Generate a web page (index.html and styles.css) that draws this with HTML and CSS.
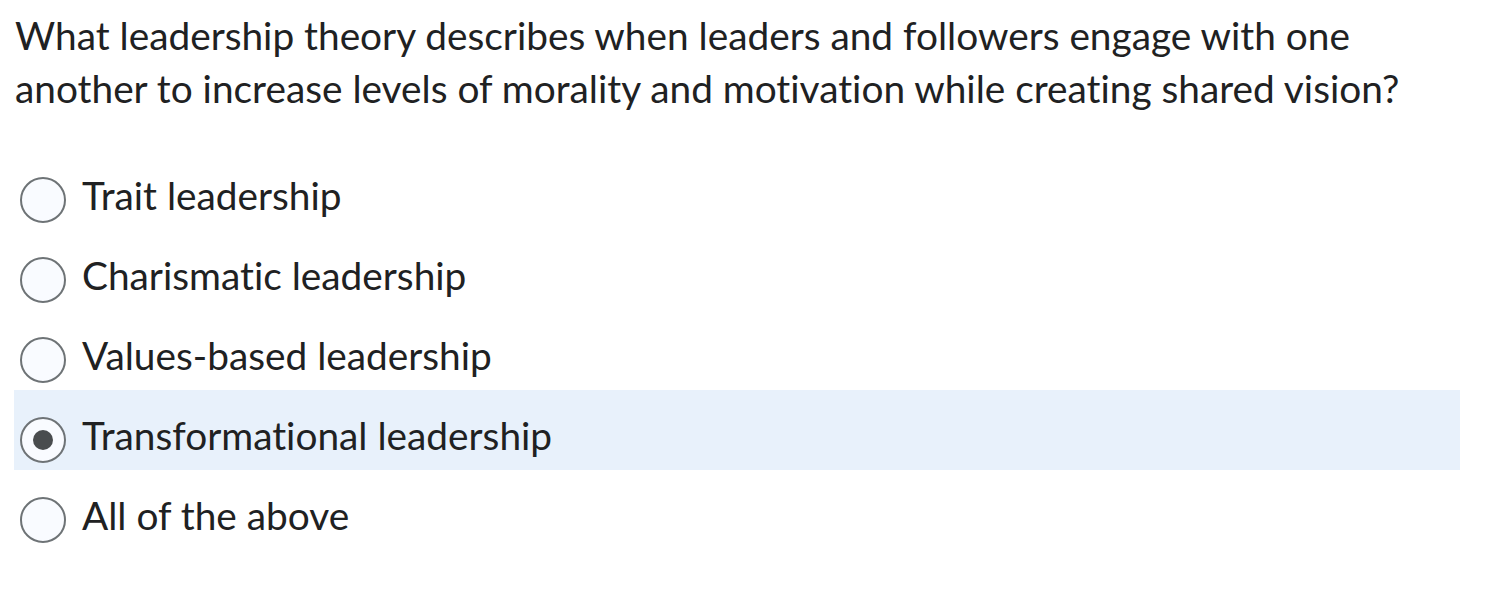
FILE: index.html
```html
<!DOCTYPE html>
<html lang="en">
<head>
<meta charset="utf-8">
<title>Quiz question</title>
<link rel="stylesheet" href="styles.css">
</head>
<body>
<div class="quiz">
  <p class="question">What leadership theory describes when leaders and followers engage with one another to increase levels of morality and motivation while creating shared vision?</p>
  <div class="options" role="radiogroup">
    <label class="option"><span class="radio"></span><span class="label">Trait leadership</span></label>
    <label class="option"><span class="radio"></span><span class="label">Charismatic leadership</span></label>
    <label class="option"><span class="radio"></span><span class="label">Values-based leadership</span></label>
    <label class="option selected"><span class="radio checked"></span><span class="label">Transformational leadership</span></label>
    <label class="option"><span class="radio"></span><span class="label">All of the above</span></label>
  </div>
</div>
</body>
</html>
```
FILE: styles.css
```css
html, body {
  margin: 0;
  padding: 0;
  background: #ffffff;
}
body {
  font-family: Lato, "Open Sans", sans-serif;
  color: #202122;
  font-variant-ligatures: none;
}
.quiz {
  padding: 9px 38px 0 14px;
}
.question {
  margin: 0 0 35px 1px;
  font-size: 38.8px;
  line-height: 53px;
}
.options {
  display: flex;
  flex-direction: column;
}
.option {
  display: flex;
  align-items: flex-start;
  gap: 16px;
  height: 80px;
  padding: 27px 0 0 6px;
  box-sizing: border-box;
  font-size: 38.8px;
}
.option.selected {
  background: #e8f1fb;
}
.radio {
  flex: none;
  width: 46px;
  height: 46px;
  box-sizing: border-box;
  border: 2px solid #6e7376;
  border-radius: 50%;
  background: #f9fbff;
  display: flex;
  align-items: center;
  justify-content: center;
}
.radio.checked::after {
  content: "";
  width: 20px;
  height: 20px;
  border-radius: 50%;
  background: #494c4e;
}
.label {
  line-height: 46px;
  margin-top: -5px;
}
```
